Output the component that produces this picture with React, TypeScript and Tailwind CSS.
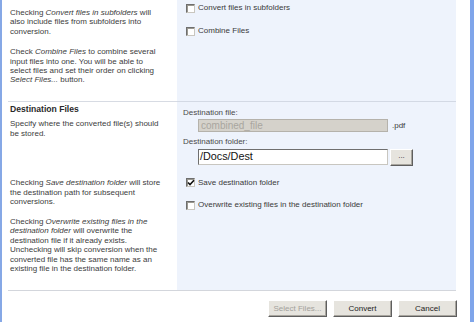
import React from "react";

const Check = ({ checked = false }: { checked?: boolean }) => (
  <div className="relative w-[9px] h-[9px] bg-white border-t-[#6e6e6e] border-l-[#6e6e6e] border-r-[#c9c6bf] border-b-[#c9c6bf] border shrink-0 shadow-[inset_1px_1px_0_#9a9890]">
    {checked && (
      <svg className="absolute left-[0px] top-[0px]" width="8" height="8" viewBox="0 0 8 8">
        <path d="M1 3.5 L3 5.5 L7 1.2" stroke="#111" strokeWidth="1.6" fill="none" />
      </svg>
    )}
  </div>
);

const CheckRow = ({ label, checked = false, className = "" }: { label: string; checked?: boolean; className?: string }) => (
  <div className={"flex items-center h-[10px] pl-[9px] gap-[3px] " + className}>
    <Check checked={checked} />
    <span className="text-[8px] leading-[10px] text-[#3a3a3a] whitespace-nowrap">{label}</span>
  </div>
);

const Btn = ({ children, disabled = false }: { children: React.ReactNode; disabled?: boolean }) => (
  <div
    className={
      "w-[59px] h-[17px] flex items-center justify-center bg-[#e6e4de] border border-t-white border-l-white border-r-[#5e5e5e] border-b-[#5e5e5e] shadow-[inset_-1px_-1px_0_#a8a59e] text-[8px] " +
      (disabled ? "text-[#a3a19b]" : "text-[#222]")
    }
  >
    {children}
  </div>
);

export default function App() {
  return (
    <div
      className="w-[474px] h-[322px] flex bg-white overflow-hidden"
      style={{ fontFamily: '"Liberation Sans", Arial, sans-serif' }}
    >
      <div className="w-[2px] bg-[#86a8e6]" />
      <div className="w-[454px] flex flex-col">
        {/* Section 1 */}
        <div className="grid grid-cols-[175px_279px] h-[101px]">
          <div className="pl-[8px] pt-[8px] text-[8px] leading-[9.4px] text-[#3c3c3c] whitespace-nowrap">
            <p>
              Checking <i>Convert files in subfolders</i> will
              <br />
              also include files from subfolders into
              <br />
              conversion.
            </p>
            <p className="mt-[11px]">
              Check <i>Combine Files</i> to combine several
              <br />
              input files into one. You will be able to
              <br />
              select files and set their order on clicking
              <br />
              <i>Select Files...</i> button.
            </p>
          </div>
          <div className="bg-[#eef3fc] pt-[3px]">
            <CheckRow label="Convert files in subfolders" />
            <CheckRow label="Combine Files" className="mt-[13px]" />
          </div>
        </div>
        <div className="flex h-px">
          <div className="w-[6px] bg-white" />
          <div className="w-[169px] bg-[#d7dbe3]" />
          <div className="w-[279px] bg-[#d3d9e4]" />
        </div>
        {/* Section 2 */}
        <div className="grid grid-cols-[175px_279px] h-[188px]">
          <div className="pl-[8px] pt-[3px] text-[8px] leading-[9.5px] text-[#3c3c3c] whitespace-nowrap">
            <p className="font-bold text-[8.6px] text-[#2a2a2a]">Destination Files</p>
            <p className="mt-[4.5px]">
              Specify where the converted file(s) should
              <br />
              be stored.
            </p>
            <p className="mt-[40px]">
              Checking <i>Save destination folder</i> will store
              <br />
              the destination path for subsequent
              <br />
              conversions.
            </p>
            <p className="mt-[10px] leading-[9.6px]">
              Checking <i>Overwrite existing files in the</i>
              <br />
              <i>destination folder</i> will overwrite the
              <br />
              destination file if it already exists.
              <br />
              Unchecking will skip conversion when the
              <br />
              converted file has the same name as an
              <br />
              existing file in the destination folder.
            </p>
          </div>
          <div className="bg-[#eef3fc] pt-[5.5px]">
            <p className="pl-[6px] text-[8px] leading-[9.5px] text-[#4a4a4a]">Destination file:</p>
            <div className="flex items-center mt-[2px] ml-[21px]">
              <div className="w-[190px] h-[13px] bg-[#d5d2cb] border border-[#b5b2ab] flex items-center pl-[2px] text-[10px] text-[#a9a69f] leading-none">
                combined_file
              </div>
              <span className="ml-[4px] text-[8px] text-[#3a3a3a]">.pdf</span>
            </div>
            <p className="mt-[5px] pl-[6px] text-[8px] leading-[9.5px] text-[#4a4a4a]">Destination folder:</p>
            <div className="flex items-start mt-[2px] ml-[21px]">
              <div className="w-[190px] h-[16px] bg-white border border-t-[#6f6f6f] border-l-[#6f6f6f] border-r-[#c8c6c0] border-b-[#c8c6c0] flex items-center pl-[1px] text-[10.8px] text-[#111] leading-none">
                /Docs/Dest
              </div>
              <div className="ml-[2px] w-[23px] h-[17px] bg-[#e6e4de] border border-t-white border-l-white border-r-[#5e5e5e] border-b-[#5e5e5e] shadow-[inset_-1px_-1px_0_#a8a59e] flex items-center justify-center text-[8px] text-[#333] leading-none pb-[2px]">
                ...
              </div>
            </div>
            <CheckRow label="Save destination folder" checked className="mt-[12px]" />
            <CheckRow label="Overwrite existing files in the destination folder" className="mt-[12.5px]" />
          </div>
        </div>
        <div className="flex h-px">
          <div className="w-[6px] bg-white" />
          <div className="w-[448px] bg-[#d3d6dc]" />
        </div>
        <div className="flex justify-end gap-[6px] pt-[9px] pr-0 mr-[-1px]">
          <Btn disabled>Select Files...</Btn>
          <Btn>Convert</Btn>
          <Btn>Cancel</Btn>
        </div>
      </div>
      <div className="w-[14px]" />
      <div className="w-[4px] bg-[#7fa5ea]" />
    </div>
  );
}
